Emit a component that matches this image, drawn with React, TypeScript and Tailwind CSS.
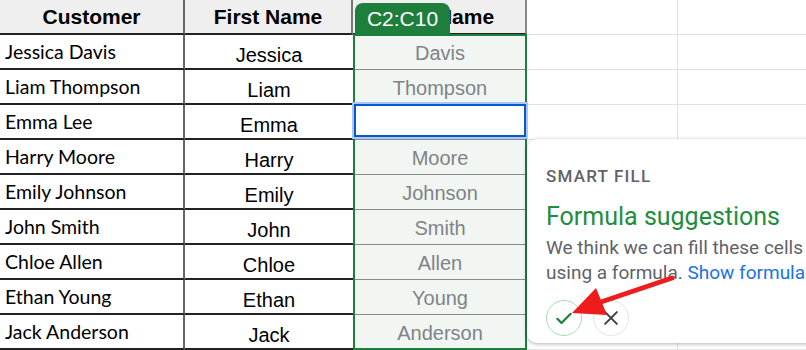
import React from "react";

const rows = [
  ["Jessica Davis", "Jessica", "Davis"],
  ["Liam Thompson", "Liam", "Thompson"],
  ["Emma Lee", "Emma", ""],
  ["Harry Moore", "Harry", "Moore"],
  ["Emily Johnson", "Emily", "Johnson"],
  ["John Smith", "John", "Smith"],
  ["Chloe Allen", "Chloe", "Allen"],
  ["Ethan Young", "Ethan", "Young"],
  ["Jack Anderson", "Jack", "Anderson"],
];

const arial = { fontFamily: '"Liberation Sans", Arial, sans-serif' };

export default function App() {
  return (
    <div className="relative h-[350px] w-[806px] overflow-hidden bg-white" style={arial}>
      {/* header */}
      <div className="flex h-[35px]">
        <div className="flex w-[185px] items-center justify-center border-r-2 border-b-2 border-r-[#666] border-b-[#222] bg-[#efefef] text-[21px] font-bold text-black">
          Customer
        </div>
        <div className="flex w-[168px] items-center justify-center border-r-2 border-b-2 border-r-[#777] border-b-[#222] bg-[#efefef] text-[21px] font-bold text-black">
          First Name
        </div>
        <div className="flex w-[174px] items-center justify-center border-r-2 border-b-2 border-r-[#888] border-b-[#222] bg-[#efefef] pl-[4px] text-[21px] font-bold text-black">
          Last Name
        </div>
        <div className="w-[151px] border-r border-b border-[#e2e2e2]" />
        <div className="flex-1 border-b border-[#e2e2e2]" />
      </div>

      {rows.map(([full, first, last], i) => (
        <div key={full} className="flex h-[35px]">
          <div
            className="flex w-[185px] items-end border-r-2 border-b-2 border-r-[#666] border-b-[#222] pb-[2px] pl-[5px] text-[19.5px] text-black"
            style={{ fontFamily: "Lato, sans-serif" }}
          >
            {full}
          </div>
          <div className="flex w-[168px] items-end justify-center border-b-2 border-b-[#222] pb-[0px] text-[20px] leading-[26px] text-black">
            {first}
          </div>
          <div
            className={`flex w-[174px] items-end justify-center border-b border-b-[#8a8a8a] pb-[1px] text-[20px] text-[#7f8387] ${
              i === 2 ? "bg-white" : "bg-[#f2f6f3]"
            }`}
          >
            {last}
          </div>
          <div className="w-[151px] border-r border-b border-[#e2e2e2]" />
          <div className="flex-1 border-b border-[#e2e2e2]" />
        </div>
      ))}

      {/* range border */}
      <div className="pointer-events-none absolute left-[353px] top-[34px] h-[316px] w-[174px] border-2 border-[#1e7e3c]" />

      {/* selected cell */}
      <div className="pointer-events-none absolute left-[352px] top-[102px] h-[37px] w-[176px] border-2 border-[#a8c7fa]">
        <div className="h-full w-full border-2 border-[#0b57d0] bg-white" />
      </div>

      {/* range tag */}
      <div className="absolute left-[355px] top-[3px] flex h-[32px] w-[95px] items-center justify-center rounded-t-[8px] bg-[#1e7e3c] text-[21px] text-white">
        C2:C10
      </div>

      {/* smart fill popup */}
      <div
        className="absolute left-[527px] top-[139px] h-[204px] w-[300px] rounded-l-[10px] bg-white pl-[19px] shadow-[0_1px_4px_rgba(0,0,0,0.3)]"
        style={{ fontFamily: "Roboto, sans-serif" }}
      >
        <div className="mt-[26px] text-[17px] leading-[22px] font-medium tracking-[0.07em] text-[#5f6368]">SMART FILL</div>
        <div className="mt-[15px] text-[25px] leading-[30px] text-[#1e8e3e]">Formula suggestions</div>
        <div className="mt-[3px] whitespace-nowrap text-[19px] leading-[25px] text-[#5f6368]">
          We think we can fill these cells
          <br />
          using a formula. <span className="text-[#1a73e8]">Show formula</span>
        </div>
        <div className="mt-[15px] flex gap-[11px]">
          <div className="flex h-[36px] w-[36px] items-center justify-center rounded-full border border-[#a8dab5]">
            <svg width="20" height="20" viewBox="0 0 24 24" fill="none" stroke="#188038" strokeWidth="2.6" strokeLinecap="round" strokeLinejoin="round">
              <path d="M4 13l5 5L20 7" />
            </svg>
          </div>
          <div className="flex h-[36px] w-[36px] items-center justify-center rounded-full border border-[#e3e3e3]">
            <svg width="20" height="20" viewBox="0 0 24 24" fill="none" stroke="#3c4043" strokeWidth="2.4" strokeLinecap="round">
              <path d="M5 5l14 14M19 5L5 19" />
            </svg>
          </div>
        </div>
      </div>

      {/* red arrow */}
      <svg className="pointer-events-none absolute left-0 top-0" width="806" height="350">
        <line x1="672" y1="278" x2="598" y2="303" stroke="#ee1c1c" strokeWidth="5" strokeLinecap="round" />
        <polygon points="572,313 596,288 607,315" fill="#ee1c1c" />
      </svg>
    </div>
  );
}
